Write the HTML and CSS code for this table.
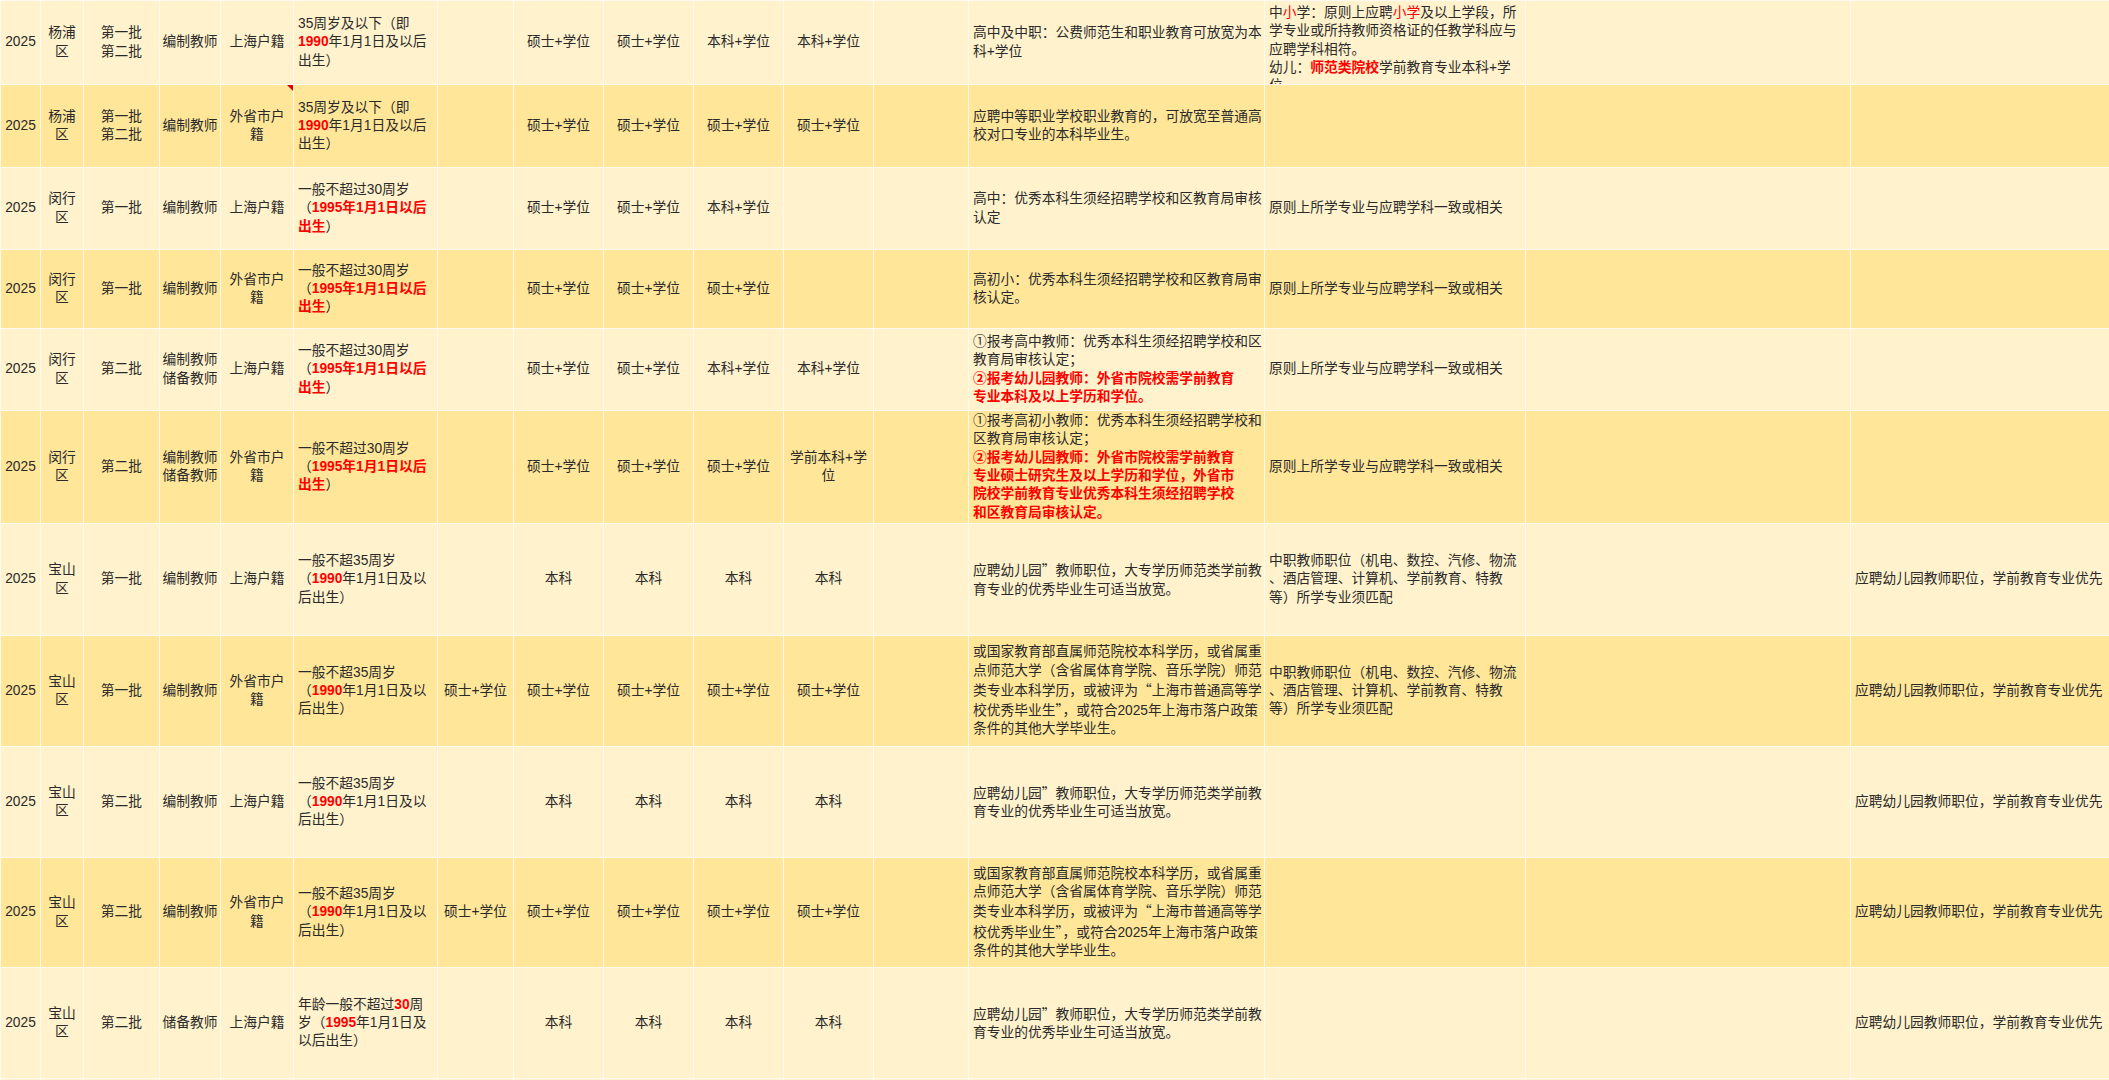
FILE: index.html
```html
<!DOCTYPE html>
<html lang="zh-CN">
<head>
<meta charset="utf-8">
<title>2025 上海教师招聘条件</title>
<link rel="stylesheet" href="styles.css">
</head>
<body>
<table class="sheet">
  <colgroup>
    <col class="w40"><col class="w43"><col class="w76"><col class="w61"><col class="w73"><col class="w144">
    <col class="w76"><col class="w90"><col class="w90"><col class="w90"><col class="w90"><col class="w95">
    <col class="w296"><col class="w261"><col class="w325"><col class="w259">
  </colgroup>
  <tbody>
  <tr class="lt h84">
    <td>2025</td>
    <td>杨浦<br>区</td>
    <td>第一批<br>第二批</td>
    <td>编制教师</td>
    <td>上海户籍</td>
    <td class="l">35周岁及以下（即<br><span class="red b">1990</span>年1月1日及以后<br>出生）</td>
    <td></td>
    <td>硕士+学位</td>
    <td>硕士+学位</td>
    <td>本科+学位</td>
    <td>本科+学位</td>
    <td></td>
    <td class="l">高中及中职：公费师范生和职业教育可放宽为本<br>科+学位</td>
    <td class="l top"><div class="clip">中<span class="red">小</span>学：原则上应聘<span class="red">小学</span>及以上学段，所<br>学专业或所持教师资格证的任教学科应与<br>应聘学科相符。<br>幼儿：<span class="red b">师范类院校</span>学前教育专业本科+学<br>位</div></td>
    <td></td>
    <td></td>
  </tr>
  <tr class="dk h83">
    <td>2025</td>
    <td>杨浦<br>区</td>
    <td>第一批<br>第二批</td>
    <td>编制教师</td>
    <td class="flagged">外省市户<br>籍<span class="flag"></span></td>
    <td class="l">35周岁及以下（即<br><span class="red b">1990</span>年1月1日及以后<br>出生）</td>
    <td></td>
    <td>硕士+学位</td>
    <td>硕士+学位</td>
    <td>硕士+学位</td>
    <td>硕士+学位</td>
    <td></td>
    <td class="l">应聘中等职业学校职业教育的，可放宽至普通高<br>校对口专业的本科毕业生。</td>
    <td></td>
    <td></td>
    <td></td>
  </tr>
  <tr class="lt h82">
    <td>2025</td>
    <td>闵行<br>区</td>
    <td>第一批</td>
    <td>编制教师</td>
    <td>上海户籍</td>
    <td class="l">一般不超过30周岁<br>（<span class="red b">1995年1月1日以后<br>出生</span>）</td>
    <td></td>
    <td>硕士+学位</td>
    <td>硕士+学位</td>
    <td>本科+学位</td>
    <td></td>
    <td></td>
    <td class="l">高中：优秀本科生须经招聘学校和区教育局审核<br>认定</td>
    <td class="l">原则上所学专业与应聘学科一致或相关</td>
    <td></td>
    <td></td>
  </tr>
  <tr class="dk h79">
    <td>2025</td>
    <td>闵行<br>区</td>
    <td>第一批</td>
    <td>编制教师</td>
    <td>外省市户<br>籍</td>
    <td class="l">一般不超过30周岁<br>（<span class="red b">1995年1月1日以后<br>出生</span>）</td>
    <td></td>
    <td>硕士+学位</td>
    <td>硕士+学位</td>
    <td>硕士+学位</td>
    <td></td>
    <td></td>
    <td class="l">高初小：优秀本科生须经招聘学校和区教育局审<br>核认定。</td>
    <td class="l">原则上所学专业与应聘学科一致或相关</td>
    <td></td>
    <td></td>
  </tr>
  <tr class="lt h82">
    <td>2025</td>
    <td>闵行<br>区</td>
    <td>第二批</td>
    <td>编制教师<br>储备教师</td>
    <td>上海户籍</td>
    <td class="l">一般不超过30周岁<br>（<span class="red b">1995年1月1日以后<br>出生</span>）</td>
    <td></td>
    <td>硕士+学位</td>
    <td>硕士+学位</td>
    <td>本科+学位</td>
    <td>本科+学位</td>
    <td></td>
    <td class="l">①报考高中教师：优秀本科生须经招聘学校和区<br>教育局审核认定；<br><span class="red b">②报考幼儿园教师：外省市院校需学前教育<br>专业本科及以上学历和学位。</span></td>
    <td class="l">原则上所学专业与应聘学科一致或相关</td>
    <td></td>
    <td></td>
  </tr>
  <tr class="dk h113">
    <td>2025</td>
    <td>闵行<br>区</td>
    <td>第二批</td>
    <td>编制教师<br>储备教师</td>
    <td>外省市户<br>籍</td>
    <td class="l">一般不超过30周岁<br>（<span class="red b">1995年1月1日以后<br>出生</span>）</td>
    <td></td>
    <td>硕士+学位</td>
    <td>硕士+学位</td>
    <td>硕士+学位</td>
    <td>学前本科+学<br>位</td>
    <td></td>
    <td class="l">①报考高初小教师：优秀本科生须经招聘学校和<br>区教育局审核认定；<br><span class="red b">②报考幼儿园教师：外省市院校需学前教育<br>专业硕士研究生及以上学历和学位，外省市<br>院校学前教育专业优秀本科生须经招聘学校<br>和区教育局审核认定。</span></td>
    <td class="l">原则上所学专业与应聘学科一致或相关</td>
    <td></td>
    <td></td>
  </tr>
  <tr class="lt h112">
    <td>2025</td>
    <td>宝山<br>区</td>
    <td>第一批</td>
    <td>编制教师</td>
    <td>上海户籍</td>
    <td class="l">一般不超35周岁<br>（<span class="red b">1990</span>年1月1日及以<br>后出生）</td>
    <td></td>
    <td>本科</td>
    <td>本科</td>
    <td>本科</td>
    <td>本科</td>
    <td></td>
    <td class="l">应聘幼儿园<span class="q">”</span>教师职位，大专学历师范类学前教<br>育专业的优秀毕业生可适当放宽。</td>
    <td class="l">中职教师职位（机电、数控、汽修、物流<br>、酒店管理、计算机、学前教育、特教<br>等）所学专业须匹配</td>
    <td></td>
    <td class="l">应聘幼儿园教师职位，学前教育专业优先</td>
  </tr>
  <tr class="dk h111">
    <td>2025</td>
    <td>宝山<br>区</td>
    <td>第一批</td>
    <td>编制教师</td>
    <td>外省市户<br>籍</td>
    <td class="l">一般不超35周岁<br>（<span class="red b">1990</span>年1月1日及以<br>后出生）</td>
    <td>硕士+学位</td>
    <td>硕士+学位</td>
    <td>硕士+学位</td>
    <td>硕士+学位</td>
    <td>硕士+学位</td>
    <td></td>
    <td class="l">或国家教育部直属师范院校本科学历，或省属重<br>点师范大学（含省属体育学院、音乐学院）师范<br>类专业本科学历，或被评为<span class="q">“</span>上海市普通高等学<br>校优秀毕业生<span class="q">”</span>，或符合2025年上海市落户政策<br>条件的其他大学毕业生。</td>
    <td class="l">中职教师职位（机电、数控、汽修、物流<br>、酒店管理、计算机、学前教育、特教<br>等）所学专业须匹配</td>
    <td></td>
    <td class="l">应聘幼儿园教师职位，学前教育专业优先</td>
  </tr>
  <tr class="lt h111">
    <td>2025</td>
    <td>宝山<br>区</td>
    <td>第二批</td>
    <td>编制教师</td>
    <td>上海户籍</td>
    <td class="l">一般不超35周岁<br>（<span class="red b">1990</span>年1月1日及以<br>后出生）</td>
    <td></td>
    <td>本科</td>
    <td>本科</td>
    <td>本科</td>
    <td>本科</td>
    <td></td>
    <td class="l">应聘幼儿园<span class="q">”</span>教师职位，大专学历师范类学前教<br>育专业的优秀毕业生可适当放宽。</td>
    <td></td>
    <td></td>
    <td class="l">应聘幼儿园教师职位，学前教育专业优先</td>
  </tr>
  <tr class="dk h110">
    <td>2025</td>
    <td>宝山<br>区</td>
    <td>第二批</td>
    <td>编制教师</td>
    <td>外省市户<br>籍</td>
    <td class="l">一般不超35周岁<br>（<span class="red b">1990</span>年1月1日及以<br>后出生）</td>
    <td>硕士+学位</td>
    <td>硕士+学位</td>
    <td>硕士+学位</td>
    <td>硕士+学位</td>
    <td>硕士+学位</td>
    <td></td>
    <td class="l">或国家教育部直属师范院校本科学历，或省属重<br>点师范大学（含省属体育学院、音乐学院）师范<br>类专业本科学历，或被评为<span class="q">“</span>上海市普通高等学<br>校优秀毕业生<span class="q">”</span>，或符合2025年上海市落户政策<br>条件的其他大学毕业生。</td>
    <td></td>
    <td></td>
    <td class="l">应聘幼儿园教师职位，学前教育专业优先</td>
  </tr>
  <tr class="lt h111">
    <td>2025</td>
    <td>宝山<br>区</td>
    <td>第二批</td>
    <td>储备教师</td>
    <td>上海户籍</td>
    <td class="l">年龄一般不超过<span class="red b">30</span>周<br>岁（<span class="red b">1995</span>年1月1日及<br>以后出生）</td>
    <td></td>
    <td>本科</td>
    <td>本科</td>
    <td>本科</td>
    <td>本科</td>
    <td></td>
    <td class="l">应聘幼儿园<span class="q">”</span>教师职位，大专学历师范类学前教<br>育专业的优秀毕业生可适当放宽。</td>
    <td></td>
    <td></td>
    <td class="l">应聘幼儿园教师职位，学前教育专业优先</td>
  </tr>
  <tr class="lt tail">
    <td></td><td></td><td></td><td></td><td></td><td></td><td></td><td></td>
    <td></td><td></td><td></td><td></td><td></td><td></td><td></td><td></td>
  </tr>
  </tbody>
</table>
</body>
</html>
```

FILE: styles.css
```css
html, body {
  margin: 0;
  padding: 0;
  background: #fff2cc;
  overflow: hidden;
}

body {
  width: 2109px;
  height: 1080px;
  font-family: "Liberation Sans", "Noto Sans CJK SC", sans-serif;
  font-size: 13.75px;
  line-height: 18.3px;
  color: #2a2a2a;
}

.sheet {
  width: 2109px;
  table-layout: fixed;
  border-collapse: collapse;
  border-spacing: 0;
}

.w40 { width: 40px; }
.w43 { width: 43px; }
.w76 { width: 76px; }
.w61 { width: 61px; }
.w73 { width: 73px; }
.w144 { width: 144px; }
.w90 { width: 90px; }
.w95 { width: 95px; }
.w296 { width: 296px; }
.w261 { width: 261px; }
.w325 { width: 325px; }
.w259 { width: 259px; }

tr.lt { background: #fff2cc; }
tr.dk { background: #ffe699; }

.h79 { height: 79px; }
.h82 { height: 82px; }
.h83 { height: 83px; }
.h84 { height: 84px; }
.h110 { height: 110px; }
.h111 { height: 111px; }
.h112 { height: 112px; }
.h113 { height: 113px; }
.tail { height: 4px; }

td {
  padding: 0 2px;
  border: 1px solid #fffaf0;
  text-align: center;
  vertical-align: middle;
  white-space: nowrap;
  overflow: visible;
}

td.l {
  text-align: left;
  padding-left: 4px;
}

td.top {
  vertical-align: top;
  padding-top: 3px;
}

.clip {
  height: 80px;
  overflow: hidden;
}

.red { color: #ff0000; }
.b { font-weight: bold; }

.q { font-family: "Noto Sans CJK SC", sans-serif; }

.flagged { position: relative; }

.flag {
  position: absolute;
  top: 0;
  right: 0;
  width: 0;
  height: 0;
  border-top: 6px solid #e00000;
  border-left: 6px solid transparent;
}
```
